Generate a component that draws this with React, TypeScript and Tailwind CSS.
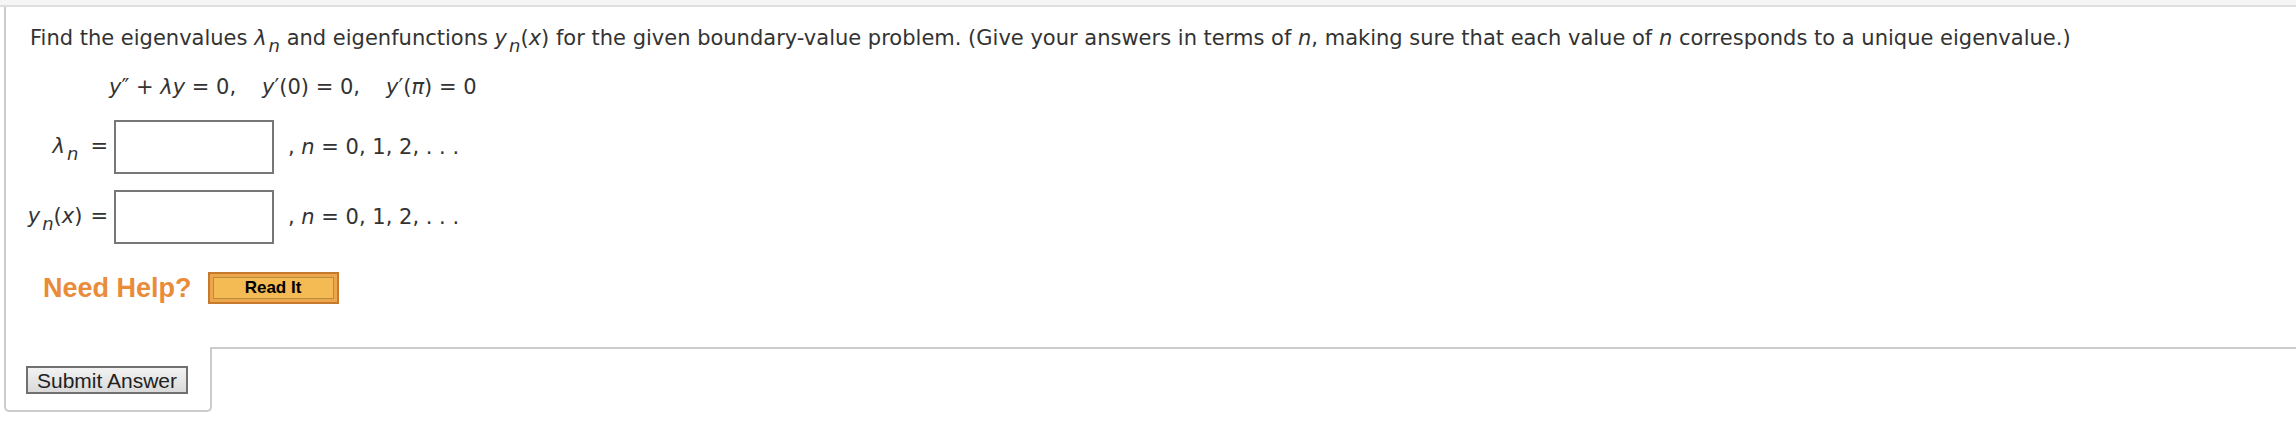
const font = { fontFamily: '"DejaVu Sans", Verdana, sans-serif' };
const arial = { fontFamily: '"Liberation Sans", Arial, sans-serif' };

function Sub({ children }: { children: React.ReactNode }) {
  return <span className="italic text-[18px] leading-none align-[-7px] ml-[2px]">{children}</span>;
}

function AnswerRow({ label }: { label: React.ReactNode }) {
  return (
    <div className="flex items-center">
      <div className="w-[78px] flex justify-end">
        <span className="whitespace-nowrap">{label}</span>
      </div>
      <div className="ml-[6px] w-[160px] h-[54px] border-2 border-[#777] bg-white" />
      <div className="ml-[14px] whitespace-nowrap">
        , <i>n</i> = 0, 1, 2, . . .
      </div>
    </div>
  );
}

function ReadItButton() {
  return (
    <div className="w-[131px] h-[32px] border-2 border-[#c57a2f] bg-[#eea64b] p-[3px]">
      <div className="h-full border border-[#b98b3e] bg-[#f4bb55] flex items-center justify-center">
        <span className="font-bold text-[17px] text-black" style={arial}>
          Read It
        </span>
      </div>
    </div>
  );
}

export default function App() {
  return (
    <div className="w-[2296px] h-[426px] bg-white text-[#333]" style={font}>
      {/* top strip */}
      <div className="h-[7px] bg-[#f5f5f5] border-b-2 border-[#dedede]" />

      {/* question body */}
      <div className="ml-[4px] border-l-2 border-[#cccccc] pl-[24px] pt-[17px] pb-[43px] text-[21px] leading-[28px]">
        <p className="whitespace-nowrap">
          Find the eigenvalues <i>λ</i>
          <Sub>n</Sub> and eigenfunctions <i>y</i>
          <Sub>n</Sub>(<i>x</i>) for the given boundary-value problem. (Give your answers in terms of <i>n</i>, making
          sure that each value of <i>n</i> corresponds to a unique eigenvalue.)
        </p>

        <div className="mt-[18px] ml-[79px] flex whitespace-nowrap">
          <span>
            <i>y</i>″ + <i>λy</i> = 0,
          </span>
          <span className="ml-[26px]">
            <i>y</i>′(0) = 0,
          </span>
          <span className="ml-[26px]">
            <i>y</i>′(<i>π</i>) = 0
          </span>
        </div>

        <div className="mt-[19px] flex flex-col gap-[16px]">
          <AnswerRow
            label={
              <>
                <i>λ</i>
                <Sub>n</Sub>
                <span className="ml-[12px]">=</span>
              </>
            }
          />
          <AnswerRow
            label={
              <>
                <i>y</i>
                <Sub>n</Sub>(<i>x</i>)<span className="ml-[8px]">=</span>
              </>
            }
          />
        </div>

        <div className="mt-[28px] ml-[13px] flex items-center gap-[16px]">
          <span className="font-bold text-[27px] leading-none text-[#e98b39]" style={arial}>
            Need Help?
          </span>
          <ReadItButton />
        </div>
      </div>

      {/* submit tab + rule */}
      <div className="flex">
        <div className="ml-[4px] w-[208px] border-l-2 border-r-2 border-b-2 border-[#cccccc] rounded-b-[5px] pl-[20px] pt-[19px] pb-[15px]">
          <button
            className="h-[28px] w-[162px] border-2 border-[#707070] bg-gradient-to-b from-[#f2f2f2] to-[#dadada] text-[21px] leading-none text-[#222]"
            style={arial}
          >
            Submit Answer
          </button>
        </div>
        <div className="flex-1 border-t-2 border-[#cccccc]" />
      </div>
    </div>
  );
}
